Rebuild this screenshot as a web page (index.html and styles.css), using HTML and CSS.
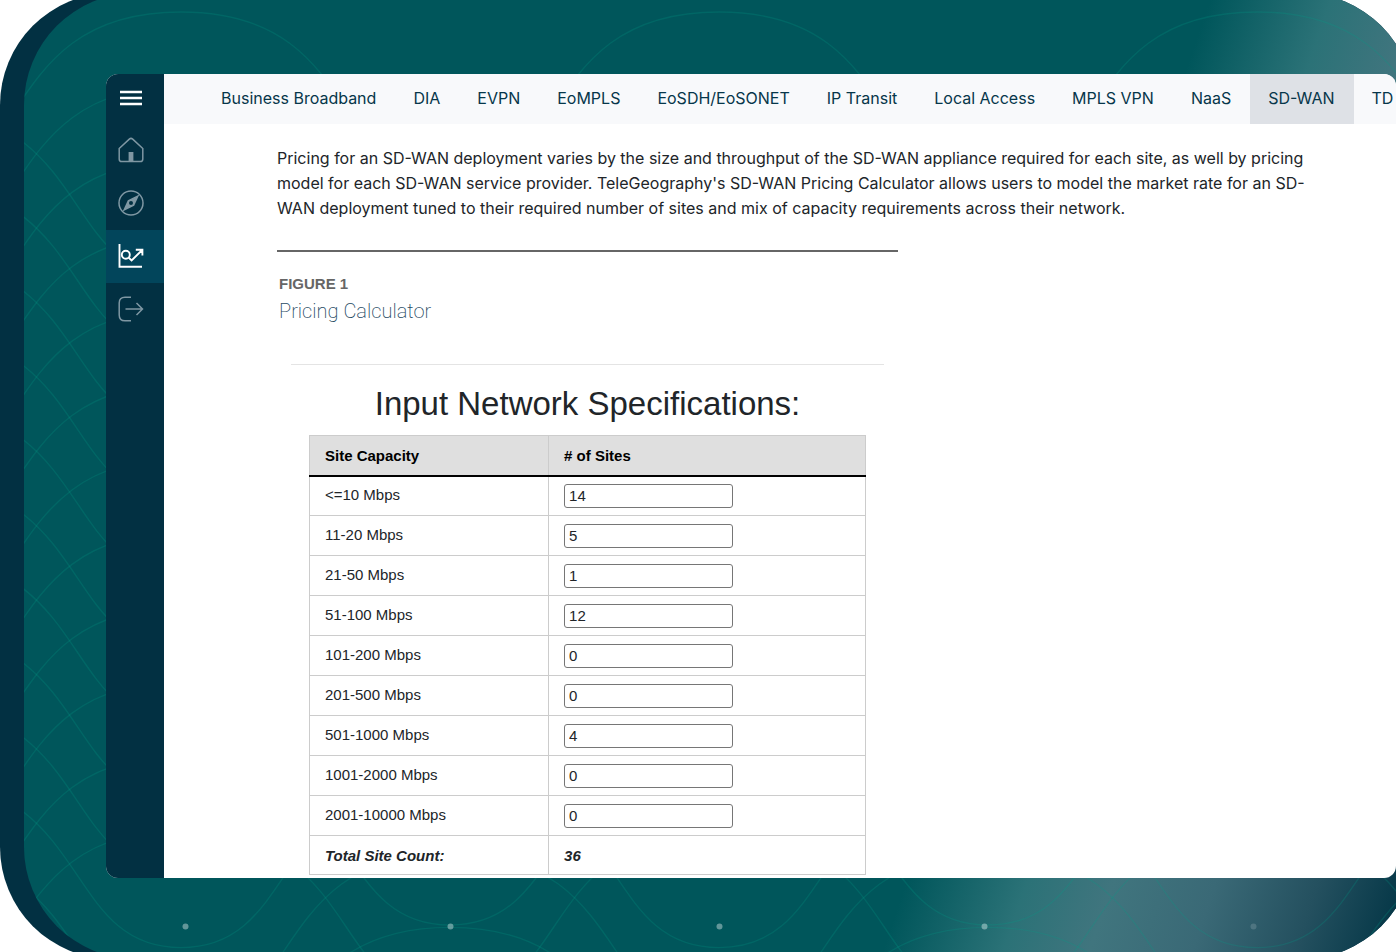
FILE: index.html
```html
<!DOCTYPE html>
<html lang="en">
<head>
  <meta charset="UTF-8" />
  <meta name="viewport" content="width=device-width, initial-scale=1.0" />
  <title>SD-WAN Pricing Calculator</title>
  <link rel="stylesheet" href="styles.css">
</head>
<body>
  <div class="frame">
    <div class="stage">
      <!-- wave pattern -->
      <svg class="waves" width="1800" height="964" viewBox="24 -7 1800 964" aria-hidden="true">
        <defs>
          <path id="wave" d="M-357 12c182 0 147 169 269 169c122 0 87-169 269-169c182 0 147 169 269 169c122 0 87-169 269-169c182 0 147 169 269 169c122 0 87-169 269-169c182 0 147 169 269 169c122 0 87-169 269-169c182 0 147 169 269 169" />
          <g id="wave-set">
            <use href="#wave" />
            <use href="#wave" y="74.4" />
            <use href="#wave" y="148.8" />
            <use href="#wave" y="223.2" />
          </g>
          <g id="wave-family">
            <use href="#wave-set" />
            <use href="#wave-set" y="297.6" />
            <use href="#wave-set" y="595.2" />
          </g>
        </defs>
        <g class="wave-lines">
          <use href="#wave-family" />
          <use href="#wave-family" x="-269" y="97" />
        </g>
        <g class="wave-dots">
          <circle cx="185.5" cy="926.5" r="3" />
          <circle cx="450.5" cy="926.5" r="3" />
          <circle cx="719.5" cy="926.5" r="3" />
          <circle cx="984.5" cy="926.5" r="3" />
          <circle class="dim" cx="1253.5" cy="926.5" r="3" />
        </g>
      </svg>

      <div class="window">
        <aside class="sidebar">
          <button type="button" class="side-item menu-btn" aria-label="Menu">
            <svg width="22" height="16" viewBox="0 0 22 16"><path d="M0 2h22M0 8h22M0 14h22" stroke="#fff" stroke-width="2.4" /></svg>
          </button>
          <a href="#" class="side-item" aria-label="Home">
            <svg width="26" height="26" viewBox="0 0 26 26"><path d="M1.2 11.5L11.3 2.1Q13 .6 14.7 2.1L24.8 11.5V22Q24.8 24.6 22.2 24.6H3.8Q1.2 24.6 1.2 22Z" /><path class="fill" d="M10.6 15h4.8v9h-4.8z" /></svg>
          </a>
          <a href="#" class="side-item" aria-label="Explore">
            <svg width="26" height="26" viewBox="0 0 26 26"><circle cx="13" cy="13" r="12" /><path class="fill" fill-rule="evenodd" d="M21.4 4.6L16.2 15.8L4.6 21.4L9.8 10.2ZM13 11A2 2 0 1 0 13 15A2 2 0 1 0 13 11Z" /></svg>
          </a>
          <a href="#" class="side-item active" aria-label="Pricing">
            <svg width="26" height="26" viewBox="0 0 26 26"><path d="M1.5 1V23.8H24" /><circle cx="7.8" cy="11.8" r="4" /><path d="M10.8 14.8L13.6 17.4L24 7.2M17.8 6.7H24.4V12.6" /></svg>
          </a>
          <a href="#" class="side-item" aria-label="Log out">
            <svg width="26" height="26" viewBox="0 0 26 26"><path d="M13 1.2H7Q1.2 1.2 1.2 7V19Q1.2 24.8 7 24.8H13M7.5 13H24.5M18.5 7L24.5 13L18.5 19" /></svg>
          </a>
        </aside>

        <div class="main">
          <nav class="tabs">
            <a href="#">Business Broadband</a>
            <a href="#">DIA</a>
            <a href="#">EVPN</a>
            <a href="#">EoMPLS</a>
            <a href="#">EoSDH/EoSONET</a>
            <a href="#">IP Transit</a>
            <a href="#">Local Access</a>
            <a href="#">MPLS VPN</a>
            <a href="#">NaaS</a>
            <a href="#" class="active">SD-WAN</a>
            <a href="#">TD</a>
          </nav>

          <div class="content">
            <p class="intro">Pricing for an SD-WAN deployment varies by the size and throughput of the SD-WAN appliance required for each site, as well by pricing model for each SD-WAN service provider. TeleGeography's SD-WAN Pricing Calculator allows users to model the market rate for an SD-WAN deployment tuned to their required number of sites and mix of capacity requirements across their network.</p>

            <section class="figure">
              <p class="figure-label">FIGURE 1</p>
              <h2 class="figure-title">Pricing Calculator</h2>

              <form class="calculator">
                <h1>Input Network Specifications:</h1>
                <table>
                  <thead>
                    <tr><th>Site Capacity</th><th># of Sites</th></tr>
                  </thead>
                  <tbody>
                    <tr><td><label for="s10">&lt;=10 Mbps</label></td><td><input type="text" id="s10" value="14" /></td></tr>
                    <tr><td><label for="s20">11-20 Mbps</label></td><td><input type="text" id="s20" value="5" /></td></tr>
                    <tr><td><label for="s50">21-50 Mbps</label></td><td><input type="text" id="s50" value="1" /></td></tr>
                    <tr><td><label for="s100">51-100 Mbps</label></td><td><input type="text" id="s100" value="12" /></td></tr>
                    <tr><td><label for="s200">101-200 Mbps</label></td><td><input type="text" id="s200" value="0" /></td></tr>
                    <tr><td><label for="s500">201-500 Mbps</label></td><td><input type="text" id="s500" value="0" /></td></tr>
                    <tr><td><label for="s1000">501-1000 Mbps</label></td><td><input type="text" id="s1000" value="4" /></td></tr>
                    <tr><td><label for="s2000">1001-2000 Mbps</label></td><td><input type="text" id="s2000" value="0" /></td></tr>
                    <tr><td><label for="s10000">2001-10000 Mbps</label></td><td><input type="text" id="s10000" value="0" /></td></tr>
                  </tbody>
                  <tfoot>
                    <tr><td>Total Site Count:</td><td>36</td></tr>
                  </tfoot>
                </table>
              </form>
            </section>
          </div>
        </div>
      </div>
    </div>
  </div>
</body>
</html>
```
FILE: styles.css
```css
:root {
  --navy: #023042;
  --navy-active: #02455b;
  --teal: #00565b;
  --icon: #7f97a3;
  --text: #212529;
  --line: #ccc;
}
* {
  box-sizing: border-box;
  margin: 0;
  padding: 0;
}
body {
  background-color: white;
  color: var(--text);
  font-family: Inter, "Noto Sans", sans-serif;
  font-size: 16px;
  overflow: hidden;
}
/* the rounded panels run a little past the page edges */
.frame {
  margin: -7px -18px -7px 0;
  padding-left: 24px;
  min-height: calc(100vh + 14px);
  background-color: var(--navy);
  border-radius: 112px;
  display: flex;
}
.stage {
  position: relative;
  flex: 1;
  min-width: 0;
  padding: 81px 18px 81px 82px;
  border-radius: 112px;
  overflow: hidden;
  background: linear-gradient(109deg, var(--teal) 69%, #2b7277 76%, #40757e 81%, #3a6976 87%, #24505f 93%, #063848 98%);
}
.waves {
  position: absolute;
  top: 0;
  left: 0;
}
.wave-lines {
  fill: none;
  stroke: #00a087;
  stroke-opacity: 0.22;
  stroke-width: 1.4;
}
.wave-dots {
  fill: #fff;
  fill-opacity: 0.38;
}
.wave-dots .dim {
  fill-opacity: 0.15;
}
.window {
  position: relative;
  display: flex;
  background-color: white;
  border-radius: 12px;
  overflow: hidden;
}

/* sidebar */
.sidebar {
  flex: 0 0 58px;
  background-color: var(--navy);
}
.side-item {
  display: flex;
  align-items: center;
  justify-content: center;
  width: 100%;
  height: 53px;
  padding: 0 8px 2px 0;
  border: none;
  background: none;
}
.side-item svg {
  fill: none;
  stroke: var(--icon);
  stroke-width: 1.5;
}
.side-item .fill {
  fill: var(--icon);
  stroke: none;
}
.side-item.active {
  background-color: var(--navy-active);
}
.side-item.active svg {
  stroke: #fff;
  stroke-width: 1.9;
}
.menu-btn {
  height: 50px;
  cursor: pointer;
}

/* tabs */
.main {
  flex: 1;
  min-width: 0;
}
.tabs {
  display: flex;
  height: 50px;
  padding-left: 39px;
  background-color: #f8f9fb;
  overflow: hidden;
}
.tabs a {
  flex: none;
  padding: 0 19px 0 18px;
  line-height: 48px;
  color: #06364a;
  text-decoration: none;
  white-space: nowrap;
}
.tabs a.active {
  background-color: #dee1e6;
}

/* content */
.content {
  padding: 22px 88px 3px 113px;
}
.intro {
  line-height: 25px;
}
.figure {
  max-width: 621px;
  margin-top: 29px;
  padding-top: 22px;
  border-top: 2px solid #666;
  font-family: "Liberation Sans", Arial, sans-serif;
}
.figure-label {
  padding-left: 2px;
  font-size: 15px;
  line-height: 20px;
  font-weight: bold;
  color: #666;
}
.figure-title {
  padding-left: 2px;
  font-family: Roboto, sans-serif;
  font-size: 20px;
  line-height: 34px;
  font-weight: 200;
  color: #1f4a63;
}
.calculator {
  margin: 36px 14px 0;
  padding: 18px 18px 0;
  border-top: 1px solid #e4e4e4;
}
h1 {
  font-size: 33px;
  line-height: 42px;
  font-weight: normal;
  text-align: center;
}
table {
  width: 100%;
  margin-top: 10px;
  border-collapse: collapse;
  font-size: 15px;
}
th,
td {
  height: 40px;
  padding: 0 15px;
  border: 1px solid var(--line);
  text-align: left;
}
th {
  background-color: #dfdfdf;
  border-bottom: 2px solid #000;
  color: #000;
}
th:first-child {
  width: 43%;
}
td label {
  display: block;
  padding-bottom: 2px;
}
td input {
  display: block;
  width: 169px;
  height: 24px;
  padding: 0 4px;
  border: 1px solid #767676;
  border-radius: 3px;
  font-family: inherit;
  font-size: 15px;
  color: var(--text);
}
tfoot td {
  height: 39px;
  font-weight: bold;
  font-style: italic;
}
```
